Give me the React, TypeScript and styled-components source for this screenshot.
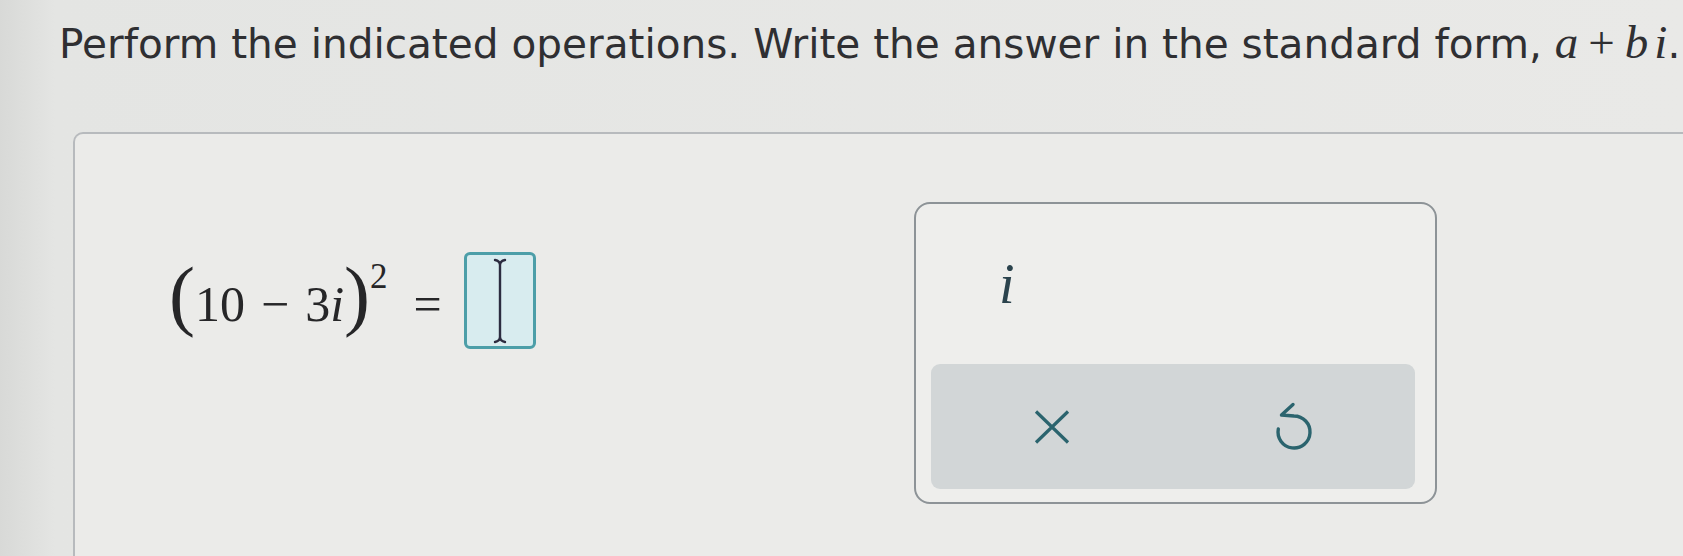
import React from "react";
import styled, { createGlobalStyle } from "styled-components";

const GlobalStyle = createGlobalStyle`
  html, body {
    margin: 0;
    padding: 0;
    height: 100%;
  }
  body {
    overflow: hidden;
    background: linear-gradient(90deg, #d8d9d7 0, #e4e5e3 55px, #e9e9e7 100%);
    font-family: "DejaVu Sans", Verdana, sans-serif;
    color: #333335;
  }
`;

const Page = styled.div`
  height: 556px;
  display: flex;
  flex-direction: column;
`;

const Title = styled.div`
  padding: 22px 0 0 59px;
  font-size: 40.6px;
  line-height: 40px;
  white-space: nowrap;
  color: #2f2f32;
`;

const MathInline = styled.span`
  font-family: "Liberation Serif", "Times New Roman", serif;
  font-size: 47px;
`;

const MathVar = styled.span<{ $gap?: number }>`
  font-style: italic;
  margin-left: ${({ $gap }) => $gap ?? 0}px;
`;

const MathOp = styled.span<{ $space: number }>`
  margin: 0 ${({ $space }) => $space}px;
`;

const WorkArea = styled.div`
  flex: 1;
  margin: 68px 0 0 73px;
  border-top: 2px solid #b7babd;
  border-left: 2px solid #b7babd;
  border-top-left-radius: 10px;
  background: #ebebe9;
  display: flex;
  align-items: flex-start;
  padding: 68px 0 0 94px;
`;

const Expression = styled.div`
  display: flex;
  align-items: flex-start;
  margin-top: 50px;
`;

const MathText = styled.div`
  margin-top: 2px;
  font-family: "Liberation Serif", "Times New Roman", serif;
  font-size: 50px;
  line-height: 100px;
  white-space: nowrap;
  color: #262628;
`;

const Paren = styled.span`
  font-size: 78px;
  line-height: 0;
`;

const Op = styled.span<{ $left: number; $right: number }>`
  margin: 0 ${({ $right }) => $right}px 0 ${({ $left }) => $left}px;
`;

const Italic = styled.span`
  font-style: italic;
`;

const Sup = styled.span`
  font-size: 35px;
  line-height: 0;
  vertical-align: 33px;
`;

const AnswerBox = styled.div`
  margin-left: 22px;
  width: 66px;
  height: 91px;
  border: 3px solid #4c9ea8;
  border-radius: 6px;
  background: #d8ecef;
  display: flex;
  align-items: center;
  justify-content: center;
`;

const Panel = styled.div`
  margin-left: 378px;
  width: 484px;
  height: 285px;
  border: 2px solid #8d9397;
  border-radius: 16px;
  background: #eeeeec;
  padding: 0 20px 13px 15px;
  display: flex;
  flex-direction: column;
`;

const KeyRow = styled.div`
  height: 160px;
  display: flex;
`;

const Key = styled.div`
  width: 152px;
  display: flex;
  align-items: center;
  justify-content: center;
  font-family: "Liberation Serif", "Times New Roman", serif;
  font-style: italic;
  font-size: 56px;
  line-height: 56px;
  color: #2b434d;
`;

const ActionBar = styled.div`
  height: 125px;
  border-radius: 9px;
  background: #d2d6d7;
  display: grid;
  grid-template-columns: 1fr 1fr;
  align-items: center;
  justify-items: center;
`;

const ActionButton = styled.div`
  display: flex;
  align-items: center;
  justify-content: center;
  color: #2b646e;
`;

const TextCursor = () => (
  <svg width="16" height="86" viewBox="0 0 16 86">
    <path
      d="M3 2 Q8 3 8 7 Q8 3 13 2 M8 7 L8 79 M3 84 Q8 83 8 79 Q8 83 13 84"
      fill="none"
      stroke="#2c2c40"
      strokeWidth="2.4"
      strokeLinecap="round"
    />
  </svg>
);

const CrossIcon = () => (
  <svg width="36" height="34" viewBox="0 0 36 34">
    <path d="M2 1.5 L34 32.5 M34 1.5 L2 32.5" stroke="currentColor" strokeWidth="3.2" fill="none" />
  </svg>
);

const UndoIcon = () => (
  <svg width="42" height="50" viewBox="0 0 42 50">
    <path
      d="M20 2.5 L8.5 13 L21 14 A16 16 0 1 1 5.3 27"
      stroke="currentColor"
      strokeWidth="3.4"
      fill="none"
      strokeLinecap="round"
      strokeLinejoin="round"
    />
  </svg>
);

export default function App() {
  return (
    <>
      <GlobalStyle />
      <Page>
        <Title>
          Perform the indicated operations. Write the answer in the standard form,{" "}
          <MathInline>
            <MathVar>a</MathVar>
            <MathOp $space={10}>+</MathOp>
            <MathVar>b</MathVar>
            <MathVar $gap={6}>i</MathVar>
          </MathInline>
          .
        </Title>
        <WorkArea>
          <Expression>
            <MathText>
              <Paren>(</Paren>
              10
              <Op $left={16} $right={16}>−</Op>
              3
              <Italic>i</Italic>
              <Paren>)</Paren>
              <Sup>2</Sup>
              <Op $left={26} $right={0}>=</Op>
            </MathText>
            <AnswerBox>
              <TextCursor />
            </AnswerBox>
          </Expression>
          <Panel>
            <KeyRow>
              <Key>i</Key>
            </KeyRow>
            <ActionBar>
              <ActionButton>
                <CrossIcon />
              </ActionButton>
              <ActionButton>
                <UndoIcon />
              </ActionButton>
            </ActionBar>
          </Panel>
        </WorkArea>
      </Page>
    </>
  );
}
